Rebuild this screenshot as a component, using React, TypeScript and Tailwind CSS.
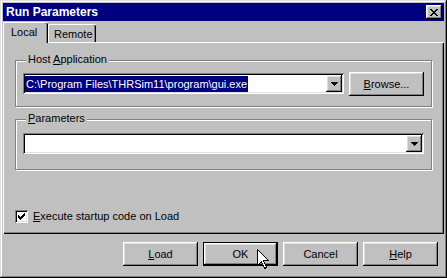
import React from "react";

const raised =
  "shadow-[inset_-1px_-1px_#000,inset_1px_1px_#fff,inset_-2px_-2px_#808080,inset_2px_2px_#dfdfdf]";
const sunken =
  "shadow-[inset_1px_1px_#808080,inset_-1px_-1px_#fff,inset_2px_2px_#000,inset_-2px_-2px_#dfdfdf]";

function DropArrow() {
  return (
    <div className={`w-[16px] h-[17px] bg-[#c0c0c0] ${raised} flex items-center justify-center`}>
      <svg width="7" height="4" viewBox="0 0 7 4" shapeRendering="crispEdges">
        <path d="M0 0h7v1H0zM1 1h5v1H1zM2 2h3v1H2zM3 3h1v1H3z" fill="#000" />
      </svg>
    </div>
  );
}

function Button({
  children,
  isDefault,
}: {
  children: React.ReactNode;
  isDefault?: boolean;
}) {
  if (isDefault) {
    return (
      <div className="w-[75px] h-[24px] border border-black">
        <div className={`w-full h-full ${raised} flex items-center justify-center`}>
          {children}
        </div>
      </div>
    );
  }
  return (
    <div className={`w-[75px] h-[24px] ${raised} flex items-center justify-center`}>
      {children}
    </div>
  );
}

function GroupBox({
  label,
  className,
  children,
}: {
  label: React.ReactNode;
  className: string;
  children: React.ReactNode;
}) {
  return (
    <div
      className={`relative border border-[#808080] shadow-[inset_1px_1px_#fff,1px_1px_#fff] ${className}`}
    >
      <span className="absolute -top-[8px] left-[10px] px-[2px] bg-[#c0c0c0] leading-[13px]">
        {label}
      </span>
      {children}
    </div>
  );
}

export default function App() {
  return (
    <div
      className="relative w-[447px] h-[278px] bg-[#c0c0c0] p-[3px] flex flex-col text-[11px] text-black shadow-[inset_-1px_-1px_#000,inset_1px_1px_#dfdfdf,inset_-2px_-2px_#808080,inset_2px_2px_#fff]"
      style={{ fontFamily: '"Liberation Sans", Arial, sans-serif' }}
    >
      {/* Title bar */}
      <div className="h-[18px] bg-[#000080] flex items-center justify-between pl-[3px] pr-[2px]">
        <span className="text-white font-bold text-[12px] leading-[18px]">Run Parameters</span>
        <div className={`w-[16px] h-[14px] bg-[#c0c0c0] ${raised} flex items-center justify-center`}>
          <svg width="8" height="7" viewBox="0 0 8 7" shapeRendering="crispEdges">
            <path
              d="M0 0h2v1H0zM6 0h2v1H6zM1 1h2v1H1zM5 1h2v1H5zM2 2h4v1H2zM3 3h2v1H3zM2 4h4v1H2zM1 5h2v1H1zM5 5h2v1H5zM0 6h2v1H0zM6 6h2v1H6z"
              fill="#000"
            />
          </svg>
        </div>
      </div>

      {/* Tabs */}
      <div className="h-[21px] flex items-end">
        <div className="relative z-10 -mb-[1px] w-[45px] h-[21px] bg-[#c0c0c0] rounded-t-[2px] border-l border-t border-white shadow-[inset_-1px_0_#000,inset_-2px_0_#808080] flex items-center pl-[7px] pb-[1px]">
          Local
        </div>
        <div className="w-[48px] h-[18px] bg-[#c0c0c0] rounded-t-[2px] border-l border-t border-white shadow-[inset_-1px_0_#000,inset_-2px_0_#808080] flex items-center pl-[5px] pt-[1px]">
          Remote
        </div>
      </div>

      {/* Panel */}
      <div className="h-[192px] bg-[#c0c0c0] shadow-[inset_1px_1px_#fff,inset_-1px_-1px_#000,inset_-2px_-2px_#808080] pl-[12px] pt-[18px] flex flex-col">
        <GroupBox
          className="w-[417px] h-[47px] pl-[7px] pt-[11px]"
          label={
            <>
              Host <span className="underline underline-offset-[1px]">A</span>pplication
            </>
          }
        >
          <div className="flex items-start gap-[5px]">
            <div className={`mt-[1px] w-[321px] h-[21px] bg-white ${sunken} flex items-center pl-[2px] pr-[2px]`}>
              <div className="flex-1 h-[17px] flex items-center">
                <span className="bg-[#000080] text-white h-[16px] leading-[16px] pl-[1px] pr-[1px]">
                  C:\Program Files\THRSim11\program\gui.exe
                </span>
              </div>
              <DropArrow />
            </div>
            <Button>
              <span>
                <span className="underline underline-offset-[1px]">B</span>rowse...
              </span>
            </Button>
          </div>
        </GroupBox>

        <GroupBox
          className="mt-[12px] w-[417px] h-[51px] pl-[7px] pt-[13px]"
          label={
            <>
              <span className="underline underline-offset-[1px]">P</span>arameters
            </>
          }
        >
          <div className={`w-[401px] h-[21px] bg-white ${sunken} flex items-center justify-end pr-[2px]`}>
            <DropArrow />
          </div>
        </GroupBox>

        <div className="mt-[38px] flex items-center gap-[5px]">
          <div className={`w-[13px] h-[13px] bg-white ${sunken} flex items-center justify-center`}>
            <svg width="7" height="7" viewBox="0 0 7 7" shapeRendering="crispEdges">
              <path
                d="M6 0h1v3H6zM5 1h1v3H5zM4 2h1v3H4zM3 3h1v3H3zM2 4h1v3H2zM1 3h1v3H1zM0 2h1v3H0z"
                fill="#000"
              />
            </svg>
          </div>
          <span>
            <span className="underline underline-offset-[1px]">E</span>xecute startup code on Load
          </span>
        </div>
      </div>

      {/* Buttons */}
      <div className="mt-[8px] flex justify-end gap-[5px] pr-[6px]">
        <Button>
          <span>
            <span className="underline underline-offset-[1px]">L</span>oad
          </span>
        </Button>
        <Button isDefault>
          <span>OK</span>
        </Button>
        <Button>Cancel</Button>
        <Button>
          <span>
            <span className="underline underline-offset-[1px]">H</span>elp
          </span>
        </Button>
      </div>

      {/* Mouse cursor */}
      <svg
        className="absolute left-[257px] top-[249px]"
        width="12"
        height="21"
        viewBox="0 0 12 21"
        shapeRendering="crispEdges"
      >
        <path
          d="M0.5 0.5V16.5L4.5 12.5L7.5 19.5L9.5 18.5L6.5 11.5H11.5Z"
          fill="#fff"
          stroke="#000"
          strokeWidth="1"
        />
      </svg>
    </div>
  );
}
